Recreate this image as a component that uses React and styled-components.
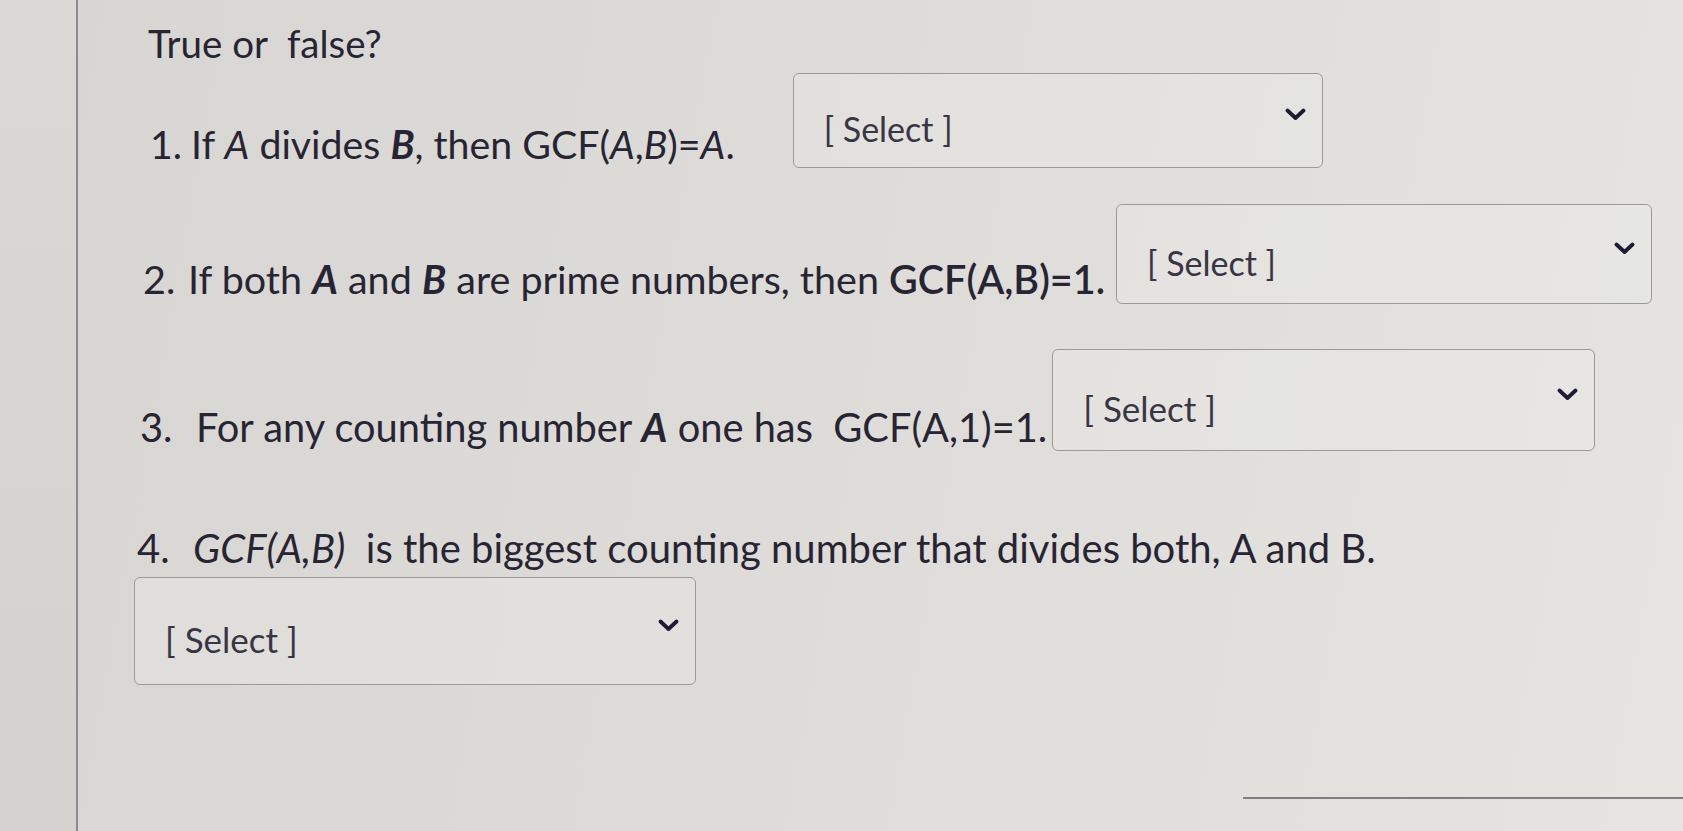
import React from "react";
import styled, { createGlobalStyle } from "styled-components";

const GlobalStyle = createGlobalStyle`
  html, body {
    margin: 0;
    padding: 0;
    height: 100%;
  }
  body {
    font-family: Lato, "Open Sans", "Liberation Sans", sans-serif;
    color: #272433;
    background: #dddbd7;
  }
`;

const Page = styled.div`
  display: grid;
  grid-template-columns: 78px 1fr;
  width: 1683px;
  height: 831px;
  overflow: hidden;
`;

const Gutter = styled.div`
  background: linear-gradient(180deg, #dad8d4 0%, #d4d2ce 100%);
  border-right: 2px solid #8c8892;
`;

const Content = styled.div`
  display: flex;
  flex-direction: column;
  padding-top: 22px;
  background: linear-gradient(100deg, #d8d6d2 0%, #dddbd7 40%, #e5e4e0 100%);
`;

const Title = styled.h1`
  margin: 0 0 8px 70px;
  font-size: 38.5px;
  font-weight: 400;
  line-height: 43px;
`;

const Row = styled.div`
  display: flex;
  align-items: flex-end;
  gap: ${(p) => p.$gap}px;
  margin-top: ${(p) => p.$top}px;
  padding-left: ${(p) => p.$indent}px;
`;

const Statement = styled.span`
  font-size: ${(p) => p.$size}px;
  line-height: 46px;
  margin-bottom: ${(p) => p.$drop}px;
  white-space: nowrap;
`;

const Num = styled.span`
  display: inline-block;
  min-width: ${(p) => p.$w}px;
`;

const Var = styled.i`
  font-weight: ${(p) => (p.$bold ? 700 : 400)};
`;

const Strong = styled.span`
  font-weight: 600;
`;

const Select = styled.div`
  display: flex;
  align-items: center;
  justify-content: space-between;
  box-sizing: border-box;
  width: ${(p) => p.$w}px;
  height: ${(p) => p.$h}px;
  padding: 0 16px 0 30px;
  border: 1.5px solid #9b999c;
  border-radius: 6px;
  background: rgba(236, 235, 231, 0.35);
  flex-shrink: 0;
`;

const SelectLabel = styled.span`
  font-size: ${(p) => p.$size}px;
  color: #383545;
  margin-top: 16px;
`;

const Chevron = styled.svg`
  width: 21px;
  height: 13px;
  margin-top: -12px;
`;

const BottomRule = styled.div`
  margin-top: 112px;
  margin-left: auto;
  width: 440px;
  border-top: 2px solid #7f7c82;
`;

const ChevronDown = () => (
  <Chevron viewBox="0 0 21 13">
    <polyline
      points="2.5,2.5 10.5,10 18.5,2.5"
      fill="none"
      stroke="#1e1b38"
      strokeWidth="3.8"
      strokeLinecap="round"
      strokeLinejoin="round"
    />
  </Chevron>
);

const Dropdown = ({ w, h, size = 34 }) => (
  <Select $w={w} $h={h}>
    <SelectLabel $size={size}>[ Select ]</SelectLabel>
    <ChevronDown />
  </Select>
);

const App = () => (
  <>
    <GlobalStyle />
    <Page>
      <Gutter />
      <Content>
        <Title>True or&nbsp; false?</Title>

        <Row $gap={58} $top={0} $indent={72}>
          <Statement $size={39.3} $drop={1}>
            <Num $w={41}>1.</Num>If <Var>A</Var> divides <Var $bold>B</Var>,
            then GCF(<Var>A</Var>,<Var>B</Var>)=<Var>A</Var>.
          </Statement>
          <Dropdown w={530} h={95} />
        </Row>

        <Row $gap={11} $top={36} $indent={65}>
          <Statement $size={39.5} $drop={2}>
            <Num $w={45}>2.</Num>If both <Var $bold>A</Var> and{" "}
            <Var $bold>B</Var> are prime numbers, then{" "}
            <Strong>GCF(A,B)=1.</Strong>
          </Statement>
          <Dropdown w={536} h={100} />
        </Row>

        <Row $gap={5} $top={45} $indent={62}>
          <Statement $size={39.8} $drop={1}>
            <Num $w={56}>3.</Num>For any counting number <Var $bold>A</Var>{" "}
            one has&nbsp; GCF(A,1)=1.
          </Statement>
          <Dropdown w={543} h={102} size={35} />
        </Row>

        <Row $gap={0} $top={74} $indent={59}>
          <Statement $size={40} $drop={0}>
            <Num $w={56}>4.</Num>
            <i>GCF(A,B)</i>&nbsp; is the biggest counting number that divides
            both, A and B.
          </Statement>
        </Row>

        <Row $gap={0} $top={6} $indent={56}>
          <Dropdown w={562} h={108} size={35} />
        </Row>

        <BottomRule />
      </Content>
    </Page>
  </>
);

export default App;
